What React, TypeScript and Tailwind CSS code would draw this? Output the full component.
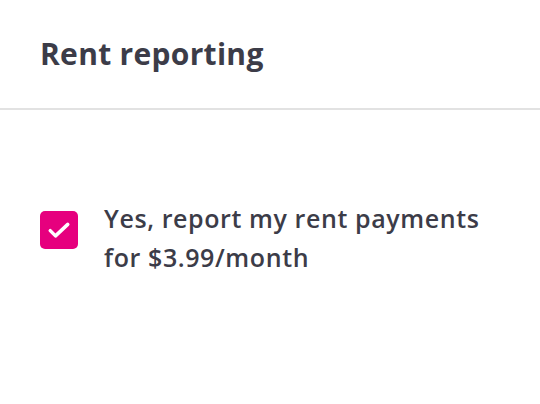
export default function App() {
  return (
    <div className="h-[404px] w-[540px] bg-white font-['Open_Sans',sans-serif] text-[#3c3c48]">
      <header className="border-b-2 border-[#e2e2e2] px-10 pb-[34px] pt-[34px]">
        <h1 className="text-[30px] font-bold leading-[40px] tracking-[0.3px]">Rent reporting</h1>
      </header>
      <label className="flex items-start gap-[26px] px-10 pt-[89px]">
        <span className="mt-[12px] flex h-[38px] w-[38px] shrink-0 items-center justify-center rounded-[5px] bg-[#e6007e]">
          <svg viewBox="0 0 24 24" className="h-[30px] w-[30px]" fill="none" stroke="white" strokeWidth="2.8" strokeLinecap="round" strokeLinejoin="round">
            <path d="M5 12.5l4.2 4.2L19 7.5" />
          </svg>
        </span>
        <span className="text-[25px] font-semibold leading-[39px] tracking-[0.6px]">
          Yes, report my rent payments
          <br />
          for $3.99/month
        </span>
      </label>
    </div>
  );
}
